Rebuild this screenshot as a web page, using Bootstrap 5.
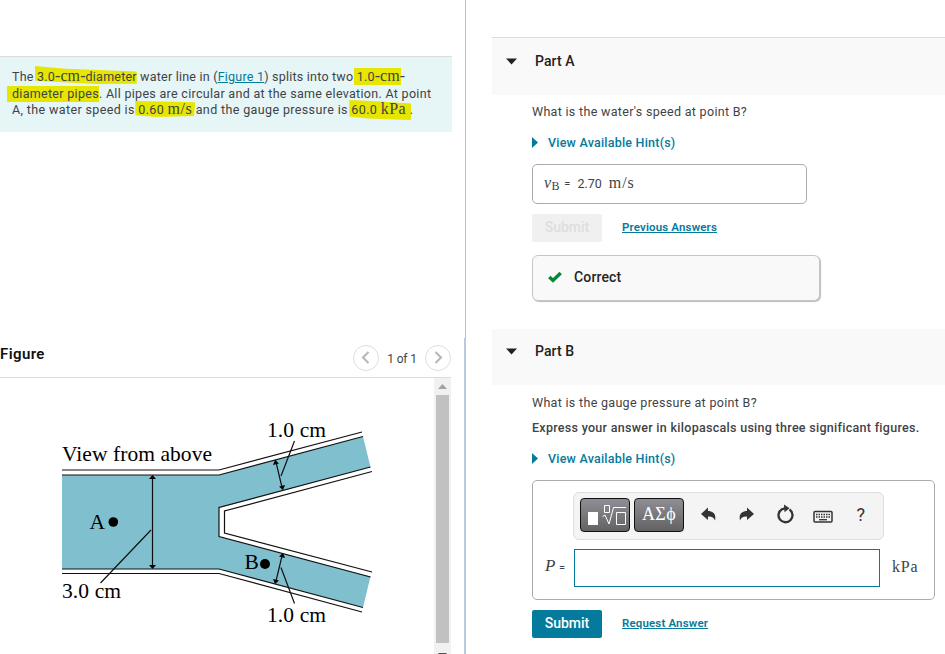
<!DOCTYPE html>
<html lang="en">
<head>
<meta charset="utf-8">
<meta name="viewport" content="width=device-width, initial-scale=1">
<title>Water line physics problem</title>
<link href="https://cdn.jsdelivr.net/npm/bootstrap@5.3.0/dist/css/bootstrap.min.css" rel="stylesheet">
<style>
body{font-family:Roboto,"Open Sans",sans-serif;font-size:12.5px;line-height:17px;color:#3f4346;letter-spacing:.31px;height:654px;overflow:hidden}
a,.teal{color:#047a9c}
.left-pane{width:466px;flex:none}
.left-top{height:338px;border-right:1px solid #b9bdca;padding-top:56px}
.left-fig{height:316px;border-right:2px solid #b7cbdd;width:466px}
.problem{width:452px;height:76px;background:#e6f5f6;border-top:1px solid #dadddd;padding:11px 0 0 12px;isolation:isolate}
.problem div{white-space:nowrap;height:16.5px}
.problem .line-a{letter-spacing:.22px}
.problem .line-b{letter-spacing:.3px}
.problem .line-c{letter-spacing:.37px}
.tex{font-family:"Liberation Serif",serif;font-size:16px;line-height:1;letter-spacing:.5px}
.problem .tex{letter-spacing:.1px}
.problem .line-c .tex{letter-spacing:.5px}
.hl{position:relative}
.hl::before{content:"";position:absolute;z-index:-1;background:#e6e600;inset:-1px -1px -1px -3px}
.h1a::before{inset:-3px 0 -3px -2px;clip-path:polygon(0 0,30% 13%,100% 26%,100% 84%,60% 86%,0 70%)}
.h2a::before{inset:0 0 -1px -5px}
.h3a::before{inset:-1px -3px -1px -3px;clip-path:polygon(0 0,100% 8%,98% 88%,35% 94%,0 84%)}
.h5a::before{inset:-2px -5px -3px -2px;clip-path:polygon(0 0,50% 8%,100% 18%,100% 100%,30% 92%,0 82%)}
.fig-head{height:40px;border-bottom:1px solid #dcdcdc;width:451px}
.fig-title{font-size:15px;font-weight:600;color:#111;letter-spacing:.4px;padding-top:8px}
.pager{width:26px;height:26px;border:1px solid #dedede}
.count{width:46px;font-size:12px;letter-spacing:-.15px;padding-top:3px}
.fig-body{width:451px;height:276px}
.sbar{width:17px;background:#f1f1f1;padding:6px 2px 0}
.thumb{background:#c1c1c1;height:248px;margin-top:6px}
.right-pane{margin-left:26px;padding-top:37px;width:453px}
.part-head{background:#f9f9f9;padding-left:14px;font-size:14px;font-weight:500;color:#222;letter-spacing:.1px}
.part-a{height:58px;border-top:1px solid #dcdcdc;padding-bottom:11px}
.part-b{height:56px;margin-top:28px;padding-bottom:11px}
.part-body{padding-left:40px}
.hint{font-weight:500;letter-spacing:.22px}
.box{border:1px solid #a9abad;border-radius:5px}
.ans-a{width:275px;height:40px;padding:0 0 2px 11px}
.sbtn{width:70px;height:28px;border-radius:2px;font-size:14px;font-weight:500;background:#047a9c;color:#fff;letter-spacing:0;padding-bottom:1px}
.sbtn.off{background:#f0f0f0;color:#dcdee0}
.lk{font-size:11.5px;font-weight:600;letter-spacing:.15px;padding-bottom:1px}
.correct{width:288px;height:46px;border:1px solid #c5c5c5;border-radius:6px;background:#f9f9f9;box-shadow:1px 1px 1px #bcbcbc;padding:0 0 1px 15px;font-size:14px;font-weight:500;color:#252525;letter-spacing:.15px}
.editor{width:403px;height:120px}
.tools{width:311px;height:48px;margin:11px 0 0 40px;background:#f4f4f4;border:1px solid #dedede;border-radius:6px;padding:0 0 2px 6px}
.tbtn{width:50px;height:34px;border:1px solid #111;border-radius:4px;background:linear-gradient(#8f8e96,#626262);color:#fff}
.greek{font:18px "Liberation Serif",serif;margin-left:4px;padding-bottom:1px}
.field{width:306px;height:38px;border:1px solid #047a9c;background:#fff}
</style>
<script src="https://cdn.jsdelivr.net/npm/bootstrap@5.3.0/dist/js/bootstrap.bundle.min.js"></script>
</head>
<body class="bg-white">
<main class="d-flex">
<section class="left-pane">
  <div class="left-top">
    <div class="problem">
      <div class="line-a">The <span class="hl h1a">3.0<span class="tex">-cm-</span>diameter</span> water line in (<a href="#">Figure 1</a>) splits into two <span class="hl">1.0<span class="tex">-cm</span></span><span class="tex">-</span></div>
      <div class="line-b"><span class="hl h2a">diameter pipes</span>. All pipes are circular and at the same elevation. At point</div>
      <div class="line-c">A, the water speed is <span class="hl h3a">0.60 <span class="tex">m/s</span></span> and the gauge pressure is <span class="hl h5a">60.0 <span class="tex">kPa</span></span> .</div>
    </div>
  </div>
  <div class="left-fig">
    <div class="fig-head d-flex justify-content-between">
      <div class="fig-title">Figure</div>
      <div class="d-flex align-items-center">
        <span class="pager rounded-circle d-flex align-items-center justify-content-center"><svg width="12" height="14" fill="none" stroke="#b5b5b5" stroke-width="2"><path d="M8.500 1 3 6.500 8.500 12"/></svg></span>
        <span class="count text-center text-nowrap">1 of 1</span>
        <span class="pager rounded-circle d-flex align-items-center justify-content-center"><svg width="12" height="14" fill="none" stroke="#b5b5b5" stroke-width="2"><path d="M3.500 1 9 6.500 3.500 12"/></svg></span>
      </div>
    </div>
    <div class="fig-body d-flex">
      <svg width="434" height="276" viewBox="0 378 434 276" font-family="Liberation Serif, serif" font-size="21.500" fill="#000" letter-spacing="0">
        <path d="M62 475H219L363 436.500 370.500 467 219 508V537L370.500 576.500 363 607.500 219 569H62Z" fill="#80bfce"/>
        <g fill="none" stroke="#111" stroke-width="1.200">
          <path d="M62 475H219L363 436.500M62 569H219L363 607.500M370.500 467 219 507.500V536.500L370.500 577"/>
          <path d="M62 470H219L362 432M62 573.500H219L362 612M372 471.500 224.500 511V533L372 572"/>
          <path d="M152.500 477V567M151 530 100.500 583M294.500 441 281 476M275.500 460 282.500 489.500M282.500 554 275.500 583M281 567.500 294.500 603.500"/>
        </g>
        <path d="m152.500 475 3.500 4h-7ZM152.500 569l3.500-4h-7ZM275 460l-2 5 6-1.500ZM283 490l2-5-6 1.500ZM283 553l2 5-6-1.500ZM275 584l-2-5 6 1.500Z"/>
        <circle cx="113.300" cy="522" r="4.800"/><circle cx="265" cy="564" r="5"/>
        <text x="62" y="460.500" textLength="150">View from above</text>
        <text x="267" y="436.500" textLength="59">1.0 cm</text>
        <text x="267" y="621.500" textLength="59">1.0 cm</text>
        <text x="62" y="598" textLength="59">3.0 cm</text>
        <text x="89.500" y="529">A</text><text x="244.500" y="568.500">B</text>
      </svg>
      <div class="sbar"><svg class="d-block mx-auto" width="9" height="5"><path d="M0 5 4.500 0 9 5Z" fill="#a2a2a2"/></svg><div class="thumb"></div><svg class="d-block mx-auto" style="margin-top:10px" width="9" height="5"><path d="M0 0H9L4.500 5Z" fill="#505050"/></svg></div>
    </div>
  </div>
</section>
<section class="right-pane">
  <div class="part-head part-a d-flex align-items-center"><svg class="me-3" width="11" height="7"><path d="M0 .5H11L5.500 6.500Z" fill="#222"/></svg><span style="margin-left:2px">Part A</span></div>
  <div class="part-body">
    <div style="padding-top:8px">What is the water's speed at point B?</div>
    <div class="hint teal d-flex align-items-center" style="margin-top:14px"><svg width="6" height="11"><path d="M0 0 6 5.500 0 11Z" fill="#047a9c"/></svg><span style="margin-left:10px">View Available Hint(s)</span></div>
    <div class="box ans-a d-flex align-items-center" style="margin-top:13px"><span class="tex"><i>v</i><span style="font-size:12px;position:relative;top:2px">B</span></span><span style="margin-left:4px;font-size:11px">=</span><span style="margin-left:7px;letter-spacing:0">2.70</span><span class="tex" style="margin-left:7px;letter-spacing:.9px">m/s</span></div>
    <div class="d-flex align-items-center" style="margin-top:10px"><span class="sbtn off d-flex align-items-center justify-content-center">Submit</span><a class="lk" href="#" style="margin-left:20px">Previous Answers</a></div>
    <div class="correct d-flex align-items-center" style="margin-top:13px"><svg width="14" height="12" style="margin-top:-2px"><path d="M1.300 6 5 9.500 12.700 2" fill="none" stroke="#00883c" stroke-width="3.400"/></svg><span style="margin-left:12px">Correct</span></div>
  </div>
  <div class="part-head part-b d-flex align-items-center"><svg class="me-3" width="11" height="7"><path d="M0 .5H11L5.500 6.500Z" fill="#222"/></svg><span style="margin-left:2px">Part B</span></div>
  <div class="part-body">
    <div style="padding-top:9px">What is the gauge pressure at point B?</div>
    <div class="text-nowrap" style="margin-top:8px;font-weight:500;letter-spacing:.29px">Express your answer in kilopascals using three significant figures.</div>
    <div class="hint teal d-flex align-items-center" style="margin-top:14px"><svg width="6" height="11"><path d="M0 0 6 5.500 0 11Z" fill="#047a9c"/></svg><span style="margin-left:10px">View Available Hint(s)</span></div>
    <div class="box editor" style="margin-top:13px">
      <div class="tools d-flex align-items-center">
        <span class="tbtn"><svg class="d-block" width="48" height="32" fill="none" stroke="#fff"><path d="M7 13H17V26H7Z" fill="#fff" stroke="none"/><path d="M23.500 6.500h5v7h-5zM35.500 13.500h9v12h-9z"/><path d="M21.500 17.500 24 16l4 9 4.500-16.500H45"/></svg></span>
        <span class="tbtn greek d-flex align-items-center justify-content-center">ΑΣϕ</span>
        <svg style="margin-left:16px" width="182" height="34" fill="none" stroke="#333">
          <g transform="translate(0 1)">
          <path d="M1 15 8 8.500V12C13 12 16.500 15 15 21.500 14 18.500 12 17.300 8 17.500V21Z" fill="#333" stroke="none"/>
          <path d="M54 15 47 8.500V12C42 12 38.500 15 40 21.500 41 18.500 43 17.300 47 17.500V21Z" fill="#333" stroke="none"/>
          <path d="M89.500 10.500A7 7 0 1 1 82 10.200L85 9.300" stroke-width="2.300"/><path d="m84 5.500 5.500 3.700-5 4Z" fill="#333" stroke="none"/>
          <rect x="114" y="12.500" width="18" height="10.500" rx="1" stroke-width="1.500"/><path d="M116 15.500h14M116 18h14" stroke-width="1.500" stroke-dasharray="1.500 1"/><path d="M119 20.700h8" stroke-width="1.300"/>
          <text x="156.500" y="22" fill="#333" stroke="none" font-size="18">?</text>
          </g>
        </svg>
      </div>
      <div class="d-flex align-items-center" style="margin-top:9px;padding-left:12px"><span class="tex fst-italic" style="width:14px;font-size:17px;padding-bottom:5px">P</span><span style="width:15px;font-size:11px;padding-bottom:2px">=</span><span class="field"></span><span class="tex" style="margin-left:12px;padding-bottom:2px;letter-spacing:.8px">kPa</span></div>
    </div>
    <div class="d-flex align-items-center" style="margin-top:10px"><span class="sbtn d-flex align-items-center justify-content-center">Submit</span><a class="lk" href="#" style="margin-left:20px">Request Answer</a></div>
  </div>
</section>
</main>
</body>
</html>
